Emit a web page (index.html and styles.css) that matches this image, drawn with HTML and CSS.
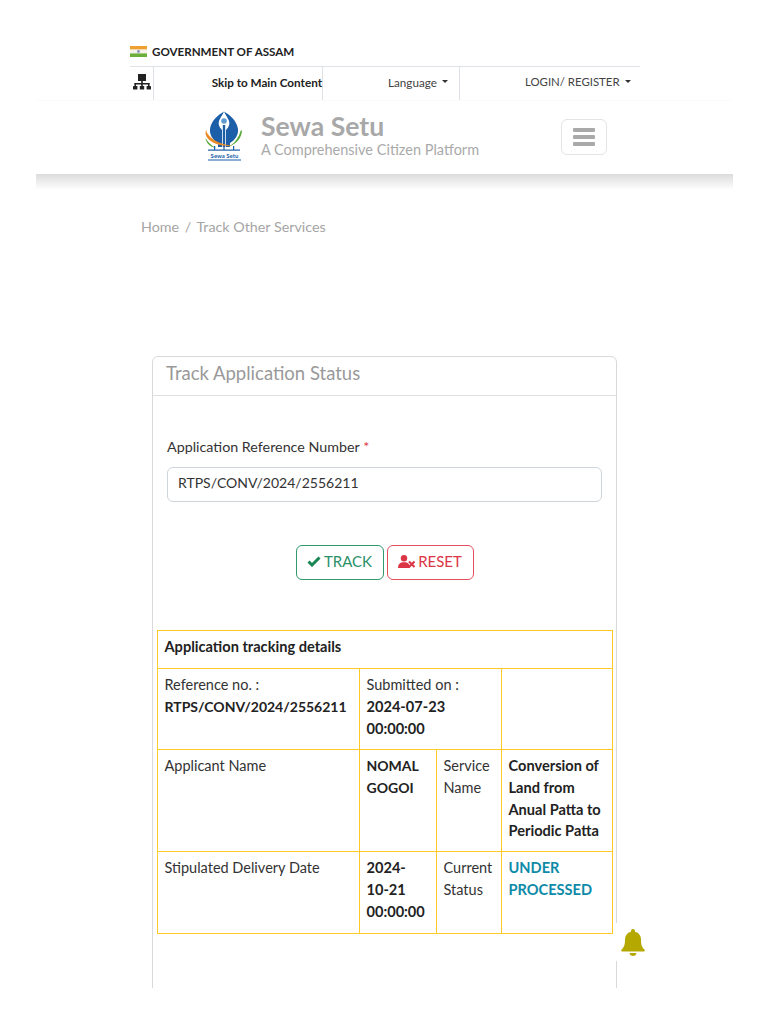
FILE: index.html
```html
<!DOCTYPE html>
<html lang="en">
<head>
    <meta charset="UTF-8">
    <meta name="viewport" content="width=device-width, initial-scale=1.0">
    <title>Track Application Status</title>
    <link rel="stylesheet" href="styles.css">
</head>
<body>
    <div class="page">
        <div class="gov">
            <svg class="flag" width="17" height="11" viewBox="0 0 17 11"><rect width="17" height="3.6" fill="#f0a030"/><rect y="3.6" width="17" height="3.8" fill="#f4f2ea"/><rect y="7.4" width="17" height="3.6" fill="#6cae3c"/><circle cx="8.5" cy="5.5" r="1.4" fill="#8a8fb8"/></svg>
            <span>GOVERNMENT OF ASSAM</span>
        </div>
        <div class="topnav">
            <div class="nav-cell nav-icon">
                <svg width="18" height="16" viewBox="0 0 18 16" fill="#222"><rect x="5" y="0" width="8" height="7"/><rect x="8.2" y="7" width="1.6" height="3"/><rect x="1.5" y="9" width="15" height="1.5"/><rect x="1.5" y="9" width="1.5" height="3"/><rect x="15" y="9" width="1.5" height="3"/><rect x="8.2" y="9" width="1.6" height="3"/><rect x="0" y="12" width="4.4" height="3.6" rx=".6"/><rect x="6.8" y="12" width="4.4" height="3.6" rx=".6"/><rect x="13.6" y="12" width="4.4" height="3.6" rx=".6"/></svg>
            </div>
            <div class="nav-cell nav-skip">Skip to Main Content</div>
            <div class="nav-cell nav-lang">Language <i class="caret"></i></div>
            <div class="nav-cell nav-login">LOGIN/ REGISTER <i class="caret"></i></div>
        </div>
        <div class="brand-bar">
            <svg class="logo" width="38" height="50" viewBox="0 0 38 50">
                <path d="M19 .5 C13 4 6 10 5 18 C4.4 24 8 29 13 32 L13 36 L17 36 L17 19 C14 16 13 13 14 10 C15 7 17 5 19 .5 Z" fill="#1c5fa8"/>
                <path d="M19 .5 C25 4 32 10 33 18 C33.6 24 30 29 25 32 L25 36 L21 36 L21 19 C24 16 25 13 24 10 C23 7 21 5 19 .5 Z" fill="#1c5fa8"/>
                <circle cx="19" cy="10" r="2.8" fill="#5f9bd0"/>
                <path d="M17.8 14 L20.2 14 L20.2 36 L17.8 36 Z" fill="#1c5fa8"/>
                <path d="M1 19 C3 27 13 33 28 35 C16 36 1 31 .5 22 Z" fill="#e98a25"/>
                <path d="M37 19 C37 26 32 33 24 35.5 C30 32 34 26 35.5 20 Z" fill="#5aa83c"/>
                <path d="M.5 27 C1 32 5 36 11 37 C6 34.5 3 31 .5 27 Z" fill="#5aa83c"/>
                <rect x="3" y="38.5" width="32" height="1.2" fill="#1c5fa8"/>
                <rect x="9" y="35" width="1.2" height="4" fill="#1c5fa8"/><rect x="18.4" y="35" width="1.2" height="4" fill="#1c5fa8"/><rect x="28" y="35" width="1.2" height="4" fill="#1c5fa8"/>
                <rect x="3" y="48.5" width="33" height="1" fill="#1c5fa8"/>
                <text x="19.5" y="47" text-anchor="middle" class="logo-text">Sewa Setu</text>
            </svg>
            <div class="brand-text">
                <div class="brand-name">Sewa Setu</div>
                <div class="brand-sub">A Comprehensive Citizen Platform</div>
            </div>
            <div class="toggler"><span></span><span></span><span></span></div>
        </div>
        <div class="crumbs">Home <span class="sep">/</span> Track Other Services</div>

        <div class="card">
            <div class="card-head">Track Application Status</div>
            <div class="card-body">
                <label class="field-label">Application Reference Number <span class="req">*</span></label>
                <div class="field">RTPS/CONV/2024/2556211</div>
                <div class="actions">
                    <button class="btn btn-track">
                        <svg width="14" height="11" viewBox="0 0 14 11" fill="none" stroke="#198754" stroke-width="3"><path d="M1.5 5.5 L5 9 L12.5 1.5"/></svg>
                        TRACK
                    </button>
                    <button class="btn btn-reset">
                        <svg width="17" height="13" viewBox="0 0 17 13" fill="#dc3545"><circle cx="6" cy="3.2" r="3.2"/><path d="M0 13 C0 9 2 7.2 6 7.2 C10 7.2 12 9 12 13 Z"/><path d="M11 6.5 L16.5 12 M16.5 6.5 L11 12" stroke="#dc3545" stroke-width="2" fill="none"/></svg>
                        RESET
                    </button>
                </div>
                <table class="details">
                    <colgroup><col class="c1"><col class="c2"><col class="c3"><col class="c4"></colgroup>
                    <tr class="r1"><td colspan="4"><b>Application tracking details</b></td></tr>
                    <tr class="r2">
                        <td>Reference no. :<br><b class="tight">RTPS/CONV/2024/2556211</b></td>
                        <td colspan="2">Submitted on :<br><b>2024-07-23 00:00:00</b></td>
                        <td></td>
                    </tr>
                    <tr class="r3">
                        <td>Applicant Name</td>
                        <td><b class="tight">NOMAL GOGOI</b></td>
                        <td>Service Name</td>
                        <td><b>Conversion of Land from Anual Patta to Periodic Patta</b></td>
                    </tr>
                    <tr class="r4">
                        <td>Stipulated Delivery Date</td>
                        <td><b>2024-<br>10-21 00:00:00</b></td>
                        <td>Current Status</td>
                        <td><b class="status">UNDER PROCESSED</b></td>
                    </tr>
                </table>
            </div>
        </div>
        <div class="bell">
            <svg width="24" height="27" viewBox="0 0 24 27" fill="#b5a800"><path d="M12 0 C13.2 0 14 .9 14 2 L14 2.8 C18 3.7 20 7 20 11 C20 16 21 18 23.4 20.6 C24.2 21.5 23.6 22.5 22.6 22.5 L1.4 22.5 C.4 22.5 -.2 21.5 .6 20.6 C3 18 4 16 4 11 C4 7 6 3.7 10 2.8 L10 2 C10 .9 10.8 0 12 0 Z"/><path d="M8.6 24 L15.4 24 C15.4 25.8 13.9 27 12 27 C10.1 27 8.6 25.8 8.6 24 Z"/></svg>
        </div>
    </div>
</body>
</html>
```

FILE: styles.css
```css
*{
    box-sizing: border-box;
    margin: 0;
    padding: 0;
}
body{
    background: #fff;
    font-family: 'Lato', sans-serif;
    color: #212529;
}
.page{
    position: relative;
    height: 988px;
    overflow: hidden;
    padding-top: 43px;
}
.gov{
    display: flex;
    align-items: center;
    gap: 5px;
    height: 16px;
    margin-left: 130px;
    font-size: 11.6px;
    font-weight: 700;
    color: #222;
}
.topnav{
    display: flex;
    width: 510px;
    height: 34px;
    margin: 7px 0 0 130px;
    border-top: 1px solid #dee2e6;
    font-size: 11.7px;
}
.nav-cell{
    display: flex;
    align-items: center;
    padding-bottom: 4px;
    border-right: 1px solid #dee2e6;
}
.nav-icon{
    width: 24px;
    padding-left: 3px;
}
.nav-skip{
    width: 169px;
    justify-content: flex-end;
    font-weight: 700;
    color: #222;
}
.nav-lang{
    width: 137px;
    padding-left: 65px;
    color: #444;
}
.nav-login{
    width: 180px;
    padding-left: 65px;
    border-right: 0;
    font-size: 11.4px;
    color: #444;
}
.caret{
    display: inline-block;
    margin-left: 5px;
    margin-bottom: 1px;
    border-top: 3.5px solid #333;
    border-left: 3px solid transparent;
    border-right: 3px solid transparent;
}
.brand-bar{
    position: relative;
    display: flex;
    align-items: center;
    width: 697px;
    height: 74px;
    margin-left: 36px;
    padding-left: 169px;
    background: #fff;
    border-top: 1px solid #fbfbfb;
}
/* shadow only goes under the bar, cut off square at both ends */
.brand-bar::after{
    content: "";
    position: absolute;
    left: 0;
    right: 0;
    top: 100%;
    height: 16px;
    background: linear-gradient(#dcdcdc, #fff);
}
.logo{
    flex: none;
    margin-bottom: 3px;
}
.logo-text{
    font-size: 6px;
    font-weight: 700;
    fill: #1c5fa8;
    font-family: 'Lato', sans-serif;
}
.brand-text{
    margin: 0 0 6px 18px;
    width: 300px;
}
.brand-name{
    font-size: 26.6px;
    font-weight: 700;
    line-height: 30px;
    color: #a8a8a8;
}
.brand-sub{
    font-size: 14.5px;
    line-height: 18px;
    color: #aaa;
}
.toggler{
    display: flex;
    flex-direction: column;
    justify-content: center;
    gap: 3px;
    width: 46px;
    height: 36px;
    margin-bottom: 2px;
    padding: 0 11px;
    border: 1px solid #e4e4e4;
    border-radius: 6px;
}
.toggler span{
    height: 4px;
    border-radius: 1px;
    background: #a9a9a9;
}
.crumbs{
    margin: 44px 0 0 141px;
    font-size: 14.3px;
    line-height: 18px;
    color: #a5a5a5;
}
.sep{
    margin: 0 2px;
}
.card{
    width: 465px;
    height: 700px;
    margin: 120px 0 0 152px;
    border: 1px solid #d9d9d9;
    border-radius: 6px;
}
.card-head{
    height: 39px;
    padding-left: 13px;
    border-bottom: 1px solid #dfdfdf;
    font-size: 18.5px;
    line-height: 33px;
    color: #999;
}
.card-body{
    padding: 40px 4px 0;
}
.field-label{
    display: block;
    margin-left: 10px;
    font-size: 14.3px;
    line-height: 22px;
    color: #333;
}
.req{
    color: #dc3545;
}
.field{
    height: 35px;
    margin: 9px 10px 0;
    padding-left: 10px;
    border: 1px solid #ced4da;
    border-radius: 6px;
    font-size: 14px;
    line-height: 30px;
    color: #333;
}
.actions{
    display: flex;
    justify-content: center;
    gap: 3px;
    margin: 43px 0 50px;
}
.btn{
    display: flex;
    align-items: center;
    justify-content: center;
    gap: 3px;
    height: 35px;
    padding-bottom: 3px;
    background: #fff;
    border-radius: 6px;
    font-family: inherit;
    font-size: 15px;
}
.btn-track{
    width: 88px;
    border: 1px solid #2f9a6a;
    color: #2a9068;
}
.btn-reset{
    width: 87px;
    border: 1px solid #e4505f;
    color: #dc3545;
}
.details{
    width: 455px;
    border-collapse: collapse;
    border: 1px solid #ffc926;
    table-layout: fixed;
    font-size: 14.5px;
    line-height: 21.75px;
    color: #333;
}
.details tr{
    border: 1px solid #ffc926;
}
.details td{
    padding: 5px 4px 5px 6.5px;
    border: 1px solid #ffc926;
    vertical-align: top;
}
.details b{
    font-size: 14.6px;
    font-weight: 700;
    color: #222;
}
.details .tight{
    font-size: 14px;
}
.c1{ width: 202px; }
.c2{ width: 77px; }
.c3{ width: 65px; }
.c4{ width: 111px; }
.r1{ height: 38px; }
.r2{ height: 81px; }
.r3{ height: 102px; }
.r4{ height: 82px; }
.details .status{
    color: #0d8aa8;
}
.bell{
    position: absolute;
    left: 613px;
    top: 923px;
    display: flex;
    justify-content: center;
    align-items: center;
    width: 40px;
    height: 38px;
    background: #fff;
}
```
